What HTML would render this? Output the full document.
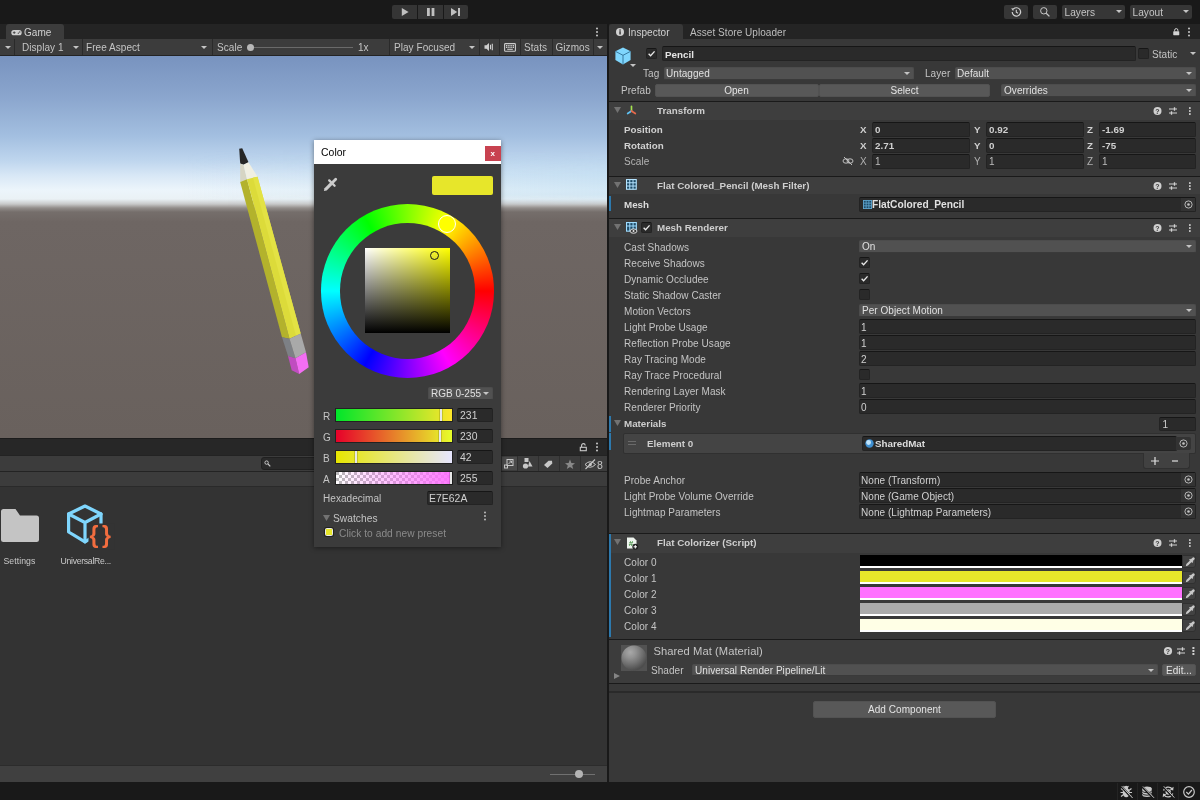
<!DOCTYPE html><html><head><meta charset="utf-8"><title>Unity</title><style>
*{box-sizing:border-box;margin:0;padding:0}
html,body{width:1200px;height:800px;overflow:hidden;background:#191919}
body{font-family:"Liberation Sans",sans-serif;font-size:10px;letter-spacing:0.05px;color:#c4c4c4;position:relative;line-height:12px;-webkit-font-smoothing:antialiased}
.a{position:absolute}
.t{position:absolute;white-space:nowrap;line-height:12px}
.b{font-weight:bold;font-size:9.8px;letter-spacing:0;color:#cecece}
.fld{position:absolute;background:#2a2a2a;border:1px solid #232323;border-top-color:#161616;border-radius:2px;color:#d0d0d0;white-space:nowrap;overflow:hidden}
.dd{position:absolute;background:#515151;border:1px solid #4c4c4c;border-bottom-color:#3a3a3a;border-radius:2px;color:#e0e0e0;white-space:nowrap;overflow:visible}
.btn{position:absolute;background:#585858;border:1px solid #525252;border-radius:2px;color:#e4e4e4;text-align:center;white-space:nowrap}
.hdr{position:absolute;left:609px;width:591px;background:#3e3e3e;border-top:1px solid #1a1a1a}
.cb{position:absolute;width:11px;height:11px;background:#2a2a2a;border:1px solid #232323;border-top-color:#161616;border-radius:2px}
.arr{position:absolute;width:0;height:0;border-left:3px solid transparent;border-right:3px solid transparent;border-top:3.5px solid #c4c4c4}
svg{position:absolute;overflow:visible}
</style></head><body><div id="app" style="position:absolute;left:0;top:0;width:1200px;height:800px;will-change:transform">
<div class="a" style="left:0px;top:0px;width:1200px;height:24px;background:#191919"></div>
<div class="a" style="left:392px;top:5px;width:76px;height:14px;background:#353535;border-radius:2px"></div>
<div class="a" style="left:417px;top:5px;width:1px;height:14px;background:#191919"></div>
<div class="a" style="left:443px;top:5px;width:1px;height:14px;background:#191919"></div>
<svg style="left:392px;top:5px" width="76" height="14" viewBox="392 5 76 14"><path d="M401.800 8 L408.600 12 L401.800 16Z" fill="#c0c0c0"/><rect x="427" y="8" width="2.800" height="8" fill="#c0c0c0"/><rect x="431.600" y="8" width="2.800" height="8" fill="#c0c0c0"/><path d="M451 8 L457.200 12 L451 16Z" fill="#c0c0c0"/><rect x="458" y="8" width="2" height="8" fill="#c0c0c0"/></svg>
<div class="a" style="left:1004px;top:5px;width:24px;height:14px;background:#363636;border-radius:2px"></div>
<div class="a" style="left:1033px;top:5px;width:24px;height:14px;background:#363636;border-radius:2px"></div>
<svg style="left:1010px;top:6px" width="12" height="12" viewBox="0 0 12 12"><path d="M2.2 6 A4.2 4.2 0 1 0 3.4 3" fill="none" stroke="#d0d0d0" stroke-width="1.2"/><path d="M1.2 2.2 L3.8 2.6 L3.2 5.2Z" fill="#d0d0d0"/><path d="M6.3 3.8 V6.3 L8 7.3" fill="none" stroke="#d0d0d0" stroke-width="1.1"/></svg>
<svg style="left:1039px;top:6px" width="12" height="12" viewBox="0 0 12 12"><circle cx="4.800" cy="4.800" r="3.200" fill="none" stroke="#c8c8c8" stroke-width="1"/><path d="M7.200 7.200 L10.400 10.400" stroke="#c8c8c8" stroke-width="1.300"/></svg>
<div class="a" style="left:1062px;top:5px;width:63px;height:14px;background:#363636;border-radius:2px"></div>
<div class="t " style="left:1064.5px;top:7px;font-size:10.1px">Layers</div>
<div class="arr" style="left:1116px;top:10px;border-top-color:#c4c4c4"></div>
<div class="a" style="left:1130px;top:5px;width:62px;height:14px;background:#363636;border-radius:2px"></div>
<div class="t " style="left:1132.5px;top:7px;font-size:10.1px">Layout</div>
<div class="arr" style="left:1183px;top:10px;border-top-color:#c4c4c4"></div>
<div class="a" style="left:0px;top:24px;width:607px;height:15px;background:#242424"></div>
<div class="a" style="left:6px;top:24px;width:58px;height:16px;background:#3c3c3c;border-radius:3px 3px 0 0"></div>
<svg style="left:10.500px;top:29.300px" width="11" height="7.300" viewBox="0 0 12 8"><rect x="0.3" y="1.2" width="11.4" height="5.6" rx="2.8" fill="#d0d0d0"/><path d="M2 4 H5 M3.5 2.6 V5.4" stroke="#3c3c3c" stroke-width="0.9"/><circle cx="8" cy="4.6" r="0.7" fill="#3c3c3c"/><circle cx="9.6" cy="3.3" r="0.7" fill="#3c3c3c"/></svg>
<div class="t " style="left:24px;top:27px;color:#d2d2d2">Game</div>
<svg style="left:595px;top:27px" width="4" height="10" viewBox="0 0 4 10"><circle cx="2" cy="1.5" r="1" fill="#c8c8c8"/><circle cx="2" cy="5" r="1" fill="#c8c8c8"/><circle cx="2" cy="8.5" r="1" fill="#c8c8c8"/></svg>
<div class="a" style="left:0px;top:39px;width:607px;height:17px;background:#3c3c3c;border-bottom:1px solid #232323"></div>
<div class="arr" style="left:5px;top:46px;border-top-color:#c4c4c4"></div>
<div class="a" style="left:14px;top:39px;width:1px;height:16px;background:#2a2a2a"></div>
<div class="t " style="left:22px;top:42px;">Display 1</div>
<div class="arr" style="left:73px;top:46px;border-top-color:#c4c4c4"></div>
<div class="a" style="left:82px;top:39px;width:1px;height:16px;background:#2a2a2a"></div>
<div class="t " style="left:86px;top:42px;">Free Aspect</div>
<div class="arr" style="left:201px;top:46px;border-top-color:#c4c4c4"></div>
<div class="a" style="left:212px;top:39px;width:1px;height:16px;background:#2a2a2a"></div>
<div class="t " style="left:217px;top:42px;">Scale</div>
<div class="a" style="left:250px;top:47px;width:103px;height:1px;background:#6a6a6a"></div>
<div class="a" style="left:247px;top:44px;width:7px;height:7px;background:#b8b8b8;border-radius:50%"></div>
<div class="t " style="left:358px;top:42px;">1x</div>
<div class="a" style="left:389px;top:39px;width:1px;height:16px;background:#2a2a2a"></div>
<div class="t " style="left:394px;top:42px;">Play Focused</div>
<div class="arr" style="left:469px;top:46px;border-top-color:#c4c4c4"></div>
<div class="a" style="left:479px;top:39px;width:1px;height:16px;background:#2a2a2a"></div>
<svg style="left:484px;top:42px" width="11" height="10" viewBox="0 0 11 10"><path d="M0.5 3.3 H2.5 L5 1 V9 L2.5 6.7 H0.5Z" fill="#d0d0d0"/><path d="M6.5 2.8 V7.2 M8.3 1.8 V8.2" stroke="#d0d0d0" stroke-width="1.1"/></svg>
<div class="a" style="left:499px;top:39px;width:1px;height:16px;background:#2a2a2a"></div>
<svg style="left:504px;top:43px" width="12" height="9" viewBox="0 0 12 9"><rect x="0.600" y="0.600" width="10.800" height="7.600" rx="0.800" fill="none" stroke="#cdcdcd" stroke-width="1.100"/><path d="M2 2.600 H10 M2 4.400 H10" stroke="#cdcdcd" stroke-width="1.100" stroke-dasharray="1.400 0.800"/><path d="M3.200 6.300 H8.800" stroke="#cdcdcd" stroke-width="1.100"/></svg>
<div class="a" style="left:520px;top:39px;width:1px;height:16px;background:#2a2a2a"></div>
<div class="t " style="left:524px;top:42px;">Stats</div>
<div class="a" style="left:552px;top:39px;width:1px;height:16px;background:#2a2a2a"></div>
<div class="t " style="left:555.5px;top:42px;">Gizmos</div>
<div class="a" style="left:593px;top:39px;width:1px;height:16px;background:#2a2a2a"></div>
<div class="arr" style="left:597px;top:46px;border-top-color:#c4c4c4"></div>
<div class="a" style="left:0px;top:56px;width:607px;height:382px;background:linear-gradient(to bottom,#7893bf 0px,#8aa5cd 40px,#a3bfe0 80px,#bfd6ee 105px,#d9e8f6 120px,#ecf5fb 134px,#eaf1f5 143px,#c8c9c9 148px,#928d8a 152px,#756e6b 156px,#6e6663 166px,#69615d 382px)"></div>
<div class="a" style="left:0px;top:150px;width:607px;height:56px;background:linear-gradient(to right,rgba(176,214,238,0) 30%,rgba(176,214,238,0.42) 100%);-webkit-mask-image:linear-gradient(to bottom,transparent,#000 45%,#000 80%,transparent);mask-image:linear-gradient(to bottom,transparent,#000 45%,#000 80%,transparent)"></div>
<svg style="left:0;top:56px" width="607" height="382" viewBox="0 56 607 382">
<polygon points="239.200,148.700 242.200,148.200 248.500,162.200 243.500,164.800 240.200,163.500" fill="#262626"/>
<polygon points="240.200,163.500 243.500,164.800 247,179.300 240.200,182" fill="#d6d5c4"/>
<polygon points="243.500,164.800 248.500,162.200 257.500,176.700 247,179.300" fill="#f0efe2"/>
<polygon points="240.200,182 247,179.300 289.500,338.700 282,337.200" fill="#b3b22c"/>
<polygon points="247,179.300 257.500,176.700 300.700,333.500 289.500,338.700" fill="#dcdb3a"/>
<polygon points="253,177.800 257.500,176.700 300.700,333.500 296,335.700" fill="#e3e244"/>
<polygon points="282,337.200 289.500,338.700 295.500,358.200 288,356" fill="#7d8085"/>
<polygon points="289.500,338.700 300.700,333.500 306,352.200 295.500,358.200" fill="#a9a9a9"/>
<polygon points="288,356 295.500,358.200 299.200,374 291.700,370.200" fill="#c04cc0"/>
<polygon points="295.500,358.200 306,352.200 308.700,367.200 299.200,374" fill="#f36ef3"/>
</svg>
<div class="a" style="left:0px;top:438px;width:607px;height:18px;background:#272727;border-top:1px solid #1c1c1c"></div>
<svg style="left:579px;top:442px" width="9" height="10" viewBox="0 0 9 10"><rect x="1.300" y="5.300" width="6" height="3.400" fill="none" stroke="#c8c8c8" stroke-width="1.100"/><path d="M2.600 5 V3.400 A1.800 1.800 0 0 1 6.200 3.400" fill="none" stroke="#c8c8c8" stroke-width="1.100"/></svg>
<svg style="left:595px;top:442px" width="4" height="10" viewBox="0 0 4 10"><circle cx="2" cy="1.5" r="1" fill="#c8c8c8"/><circle cx="2" cy="5" r="1" fill="#c8c8c8"/><circle cx="2" cy="8.5" r="1" fill="#c8c8c8"/></svg>
<div class="a" style="left:0px;top:455px;width:607px;height:17px;background:#3c3c3c;border-top:1px solid #232323;border-bottom:1px solid #232323"></div>
<div class="a" style="left:261px;top:457px;width:70px;height:13px;background:#2a2a2a;border-radius:3px;border:1px solid #202020"></div>
<svg style="left:264px;top:460px" width="7" height="7" viewBox="0 0 7 7"><circle cx="2.6" cy="2.6" r="1.7" fill="none" stroke="#c8c8c8" stroke-width="1"/><path d="M4 4 L6.3 6.3" stroke="#c8c8c8" stroke-width="1.1"/></svg>
<div class="a" style="left:0px;top:472px;width:607px;height:15px;background:#3c3c3c;border-bottom:1px solid #2a2a2a"></div>
<div class="a" style="left:0px;top:487px;width:607px;height:278px;background:#333333"></div>
<div class="a" style="left:0px;top:765px;width:607px;height:17px;background:#404040;border-top:1px solid #2c2c2c"></div>
<div class="a" style="left:550px;top:773.6px;width:45px;height:1.2px;background:#707070"></div>
<div class="a" style="left:575px;top:770.2px;width:8px;height:8px;background:#b4b4b4;border-radius:50%"></div>
<div class="a" style="left:501px;top:456px;width:1px;height:15px;background:#2f2f2f"></div>
<div class="a" style="left:517px;top:456px;width:1px;height:15px;background:#2f2f2f"></div>
<div class="a" style="left:538px;top:456px;width:1px;height:15px;background:#2f2f2f"></div>
<div class="a" style="left:559px;top:456px;width:1px;height:15px;background:#2f2f2f"></div>
<div class="a" style="left:580px;top:456px;width:1px;height:15px;background:#2f2f2f"></div>
<svg style="left:502px;top:457px" width="105" height="14" viewBox="502 457 105 14">
<rect x="502" y="457" width="15" height="13" fill="#4a4a4a"/>
<rect x="507" y="459.5" width="6" height="6" fill="none" stroke="#c8c8c8" stroke-width="1"/><rect x="504.5" y="465" width="3" height="3" fill="none" stroke="#c8c8c8" stroke-width="1"/><path d="M508.5 464 L511.5 461 M509.5 461 H511.5 V463" stroke="#c8c8c8" stroke-width="0.9" fill="none"/>
<rect x="524.500" y="458" width="4" height="4" fill="#c8c8c8"/><circle cx="525.500" cy="466" r="2.600" fill="#c8c8c8"/><path d="M529.500 461 L532.500 466.500 H528Z" fill="#c8c8c8"/>
<path d="M544 465 L548.500 460.800 L552 460.800 L552.300 463.500 L547.500 468Z" fill="#c8c8c8"/>
<path d="M570 459.5 L571.4 463 L575 463.2 L572.2 465.5 L573.2 469 L570 467 L566.8 469 L567.8 465.5 L565 463.2 L568.6 463Z" fill="#8a8a8a"/>
<path d="M585 464.5 Q590 459 595.5 464.5 Q590 470 585 464.5Z" fill="none" stroke="#c8c8c8" stroke-width="1"/><circle cx="590.3" cy="464.5" r="1.5" fill="#c8c8c8"/><path d="M585.5 469 L595 459.5" stroke="#c8c8c8" stroke-width="1.1"/>
</svg>
<div class="t " style="left:597px;top:459px;font-size:10.5px">8</div>
<svg style="left:0;top:500px" width="120" height="50" viewBox="0 500 120 50">
<path d="M1 511.500 a2.500 2.500 0 0 1 2.500 -2.500 H15.500 L20 515.500 H36.500 a2.500 2.500 0 0 1 2.500 2.500 V539.500 a2.500 2.500 0 0 1 -2.500 2.500 H3.500 a2.500 2.500 0 0 1 -2.500 -2.500Z" fill="#c4c4c4"/>
<g fill="none" stroke="#7fd6fd" stroke-width="3.200" stroke-linejoin="round" stroke-linecap="round"><path d="M85 506 L101 514 V532 L85 541.800 L68.600 532 V514Z"/><path d="M68.600 514 L85 522.500 L101 514 M85 522.500 V541.800"/></g>
<rect x="88.500" y="523.500" width="26" height="26" fill="#333333"/>
</svg>
<div class="t " style="left:89.5px;top:520px;font-size:23px;font-weight:bold;color:#f26d3f;line-height:30px;letter-spacing:3.500px">{}</div>
<div class="t " style="left:3.5px;top:555px;font-size:8.7px;color:#cacaca">Settings</div>
<div class="t " style="left:60.5px;top:555px;font-size:8.7px;letter-spacing:-0.3px;color:#cacaca">UniversalRe...</div>
<div class="a" style="left:607px;top:24px;width:2px;height:758px;background:#191919"></div>
<div class="a" style="left:609px;top:24px;width:591px;height:758px;background:#383838"></div>
<div class="a" style="left:609px;top:24px;width:591px;height:15px;background:#242424"></div>
<div class="a" style="left:609px;top:24px;width:74px;height:16px;background:#383838;border-radius:3px 3px 0 0"></div>
<svg style="left:616px;top:28px" width="8" height="8" viewBox="0 0 8 8"><circle cx="4" cy="4" r="4" fill="#d2d2d2"/><rect x="3.3" y="3.2" width="1.5" height="3.3" fill="#383838"/><rect x="3.3" y="1.4" width="1.5" height="1.3" fill="#383838"/></svg>
<div class="t " style="left:628px;top:27px;color:#d2d2d2">Inspector</div>
<div class="t " style="left:690px;top:27px;color:#bdbdbd">Asset Store Uploader</div>
<svg style="left:1172.5px;top:28px" width="6.5" height="7.5" viewBox="0 0 8 9"><rect x="0.3" y="3.8" width="7.4" height="5" rx="0.6" fill="#d2d2d2"/><path d="M2 4 V2.6 A2 2 0 0 1 6 2.6 V4" fill="none" stroke="#d2d2d2" stroke-width="1.2"/></svg>
<svg style="left:1187px;top:27px" width="4" height="10" viewBox="0 0 4 10"><circle cx="2" cy="1.5" r="1" fill="#c8c8c8"/><circle cx="2" cy="5" r="1" fill="#c8c8c8"/><circle cx="2" cy="8.5" r="1" fill="#c8c8c8"/></svg>
<svg style="left:614px;top:47px" width="18" height="18" viewBox="0 0 18 18"><path d="M9 0.6 L16.6 4.3 V13 L9 17.4 L1.4 13 V4.3Z" fill="#7fd6fd"/><path d="M1.4 4.3 L9 8.3 L16.6 4.3 M9 8.3 V17.4" stroke="#2f6f96" stroke-width="0.9" fill="none"/></svg>
<div class="arr" style="left:630px;top:64px;border-top-color:#c4c4c4"></div>
<div class="cb" style="left:646px;top:48px"><svg width="9" height="9" viewBox="0 0 10 10" style="left:0;top:0"><path d="M1.8 5.2 L4 7.4 L8.4 2.6" fill="none" stroke="#e8e8e8" stroke-width="1.5"/></svg></div>
<div class="fld" style="left:662px;top:46px;width:474px;height:15px;line-height:12px;padding-top:2px;padding-left:2px;"><b class="b" style="color:#e4e4e4">Pencil</b></div>
<div class="cb" style="left:1138px;top:48px"></div>
<div class="t " style="left:1152px;top:49px;">Static</div>
<div class="arr" style="left:1189.5px;top:52px;border-top-color:#c4c4c4"></div>
<div class="t " style="left:643px;top:68px;">Tag</div>
<div class="dd" style="left:664px;top:67px;width:250px;height:13px;line-height:12px;padding-top:0px;padding-left:1px;">Untagged</div>
<div class="arr" style="left:903.5px;top:72px;border-top-color:#c4c4c4"></div>
<div class="t " style="left:925px;top:68px;">Layer</div>
<div class="dd" style="left:955px;top:67px;width:241px;height:13px;line-height:12px;padding-top:0px;padding-left:1px;">Default</div>
<div class="arr" style="left:1185.5px;top:72px;border-top-color:#c4c4c4"></div>
<div class="t " style="left:621px;top:85px;">Prefab</div>
<div class="btn" style="left:654.5px;top:83.5px;width:164px;height:13px;line-height:12px;padding-top:0px;">Open</div>
<div class="btn" style="left:819px;top:83.5px;width:171px;height:13px;line-height:12px;padding-top:0px;">Select</div>
<div class="dd" style="left:1001px;top:83.5px;width:195px;height:13px;line-height:12px;padding-top:0px;padding-left:2px;">Overrides</div>
<div class="arr" style="left:1185.5px;top:88.5px;border-top-color:#c4c4c4"></div>
<div class="hdr" style="top:101px;height:19px"></div>
<svg style="left:614px;top:107px" width="7" height="6" viewBox="0 0 7 6"><path d="M0 0 H7 L3.5 6Z" fill="#727272"/></svg>
<svg style="left:626px;top:105px" width="11" height="11" viewBox="0 0 12 12"><path d="M6 6.5 V1.5" stroke="#a6e34f" stroke-width="1.8" stroke-linecap="round"/><path d="M6 6.5 L1.8 9.3" stroke="#5fc3f5" stroke-width="1.8" stroke-linecap="round"/><path d="M6 6.5 L10.2 9.3" stroke="#e8694a" stroke-width="1.8" stroke-linecap="round"/></svg>
<div class="t b" style="left:657px;top:105px;">Transform</div>
<svg style="left:1153px;top:105.5px" width="40" height="10" viewBox="0 0 40 10"><circle cx="4.5" cy="5" r="4" fill="#d0d0d0"/><text x="4.5" y="7.6" font-size="7" font-weight="bold" text-anchor="middle" fill="#3e3e3e" font-family="Liberation Sans,sans-serif">?</text><path d="M16 3 H24 M16 7 H24" stroke="#d0d0d0" stroke-width="1.1"/><path d="M21.5 1.2 V4.8 M18.5 5.2 V8.8" stroke="#d0d0d0" stroke-width="1.3"/><rect x="36" y="1.200" width="1.700" height="1.700" fill="#d0d0d0"/><rect x="36" y="4.200" width="1.700" height="1.700" fill="#d0d0d0"/><rect x="36" y="7.200" width="1.700" height="1.700" fill="#d0d0d0"/></svg>
<div class="t b" style="left:624px;top:124px;color:#d0d0d0">Position</div>
<div class="t b" style="left:860px;top:124px;color:#d0d0d0">X</div>
<div class="fld" style="left:872px;top:122px;width:98px;height:15px;line-height:12px;padding-top:1px;padding-left:2px;font-weight:bold;font-size:9.8px;color:#d0d0d0;">0</div>
<div class="t b" style="left:974px;top:124px;color:#d0d0d0">Y</div>
<div class="fld" style="left:986px;top:122px;width:98px;height:15px;line-height:12px;padding-top:1px;padding-left:2px;font-weight:bold;font-size:9.8px;color:#d0d0d0;">0.92</div>
<div class="t b" style="left:1087px;top:124px;color:#d0d0d0">Z</div>
<div class="fld" style="left:1099px;top:122px;width:97px;height:15px;line-height:12px;padding-top:1px;padding-left:2px;font-weight:bold;font-size:9.8px;color:#d0d0d0;">-1.69</div>
<div class="t b" style="left:624px;top:140px;color:#d0d0d0">Rotation</div>
<div class="t b" style="left:860px;top:140px;color:#d0d0d0">X</div>
<div class="fld" style="left:872px;top:138px;width:98px;height:15px;line-height:12px;padding-top:1px;padding-left:2px;font-weight:bold;font-size:9.8px;color:#d0d0d0;">2.71</div>
<div class="t b" style="left:974px;top:140px;color:#d0d0d0">Y</div>
<div class="fld" style="left:986px;top:138px;width:98px;height:15px;line-height:12px;padding-top:1px;padding-left:2px;font-weight:bold;font-size:9.8px;color:#d0d0d0;">0</div>
<div class="t b" style="left:1087px;top:140px;color:#d0d0d0">Z</div>
<div class="fld" style="left:1099px;top:138px;width:97px;height:15px;line-height:12px;padding-top:1px;padding-left:2px;font-weight:bold;font-size:9.8px;color:#d0d0d0;">-75</div>
<div class="t " style="left:624px;top:156px;color:#b4b4b4">Scale</div>
<div class="t " style="left:860px;top:156px;color:#b0b0b0">X</div>
<div class="fld" style="left:872px;top:154px;width:98px;height:15px;line-height:12px;padding-top:1px;padding-left:2px;color:#bcbcbc;">1</div>
<div class="t " style="left:974px;top:156px;color:#b0b0b0">Y</div>
<div class="fld" style="left:986px;top:154px;width:98px;height:15px;line-height:12px;padding-top:1px;padding-left:2px;color:#bcbcbc;">1</div>
<div class="t " style="left:1087px;top:156px;color:#b0b0b0">Z</div>
<div class="fld" style="left:1099px;top:154px;width:97px;height:15px;line-height:12px;padding-top:1px;padding-left:2px;color:#bcbcbc;">1</div>
<svg style="left:842px;top:156px" width="12" height="10" viewBox="0 0 12 10"><ellipse cx="4" cy="5" rx="3" ry="2.2" fill="none" stroke="#c0c0c0" stroke-width="1"/><ellipse cx="8" cy="5" rx="3" ry="2.2" fill="none" stroke="#c0c0c0" stroke-width="1"/><path d="M2 1 L10 9" stroke="#c0c0c0" stroke-width="1"/></svg>
<div class="hdr" style="top:176px;height:18px"></div>
<svg style="left:614px;top:182px" width="7" height="6" viewBox="0 0 7 6"><path d="M0 0 H7 L3.5 6Z" fill="#727272"/></svg>
<svg style="left:625.5px;top:179px" width="10.8" height="10.8" viewBox="0 0 12 12"><rect x="0.6" y="0.6" width="10.8" height="10.8" fill="#1e4a66" stroke="#b4e4ff" stroke-width="1.2"/><path d="M4.2 0.6 V11.4 M7.8 0.6 V11.4 M0.6 4.2 H11.4 M0.6 7.8 H11.4" stroke="#b4e4ff" stroke-width="1.1"/></svg>
<div class="t b" style="left:657px;top:180px;">Flat Colored_Pencil (Mesh Filter)</div>
<svg style="left:1153px;top:180.5px" width="40" height="10" viewBox="0 0 40 10"><circle cx="4.5" cy="5" r="4" fill="#d0d0d0"/><text x="4.5" y="7.6" font-size="7" font-weight="bold" text-anchor="middle" fill="#3e3e3e" font-family="Liberation Sans,sans-serif">?</text><path d="M16 3 H24 M16 7 H24" stroke="#d0d0d0" stroke-width="1.1"/><path d="M21.5 1.2 V4.8 M18.5 5.2 V8.8" stroke="#d0d0d0" stroke-width="1.3"/><rect x="36" y="1.200" width="1.700" height="1.700" fill="#d0d0d0"/><rect x="36" y="4.200" width="1.700" height="1.700" fill="#d0d0d0"/><rect x="36" y="7.200" width="1.700" height="1.700" fill="#d0d0d0"/></svg>
<div class="a" style="left:609px;top:196px;width:1.6px;height:15px;background:#2d79ad"></div>
<div class="t b" style="left:624px;top:199px;color:#dcdcdc">Mesh</div>
<div class="fld" style="left:859px;top:197px;width:337px;height:15px;line-height:12px;padding-top:2px;padding-left:3px;"></div>
<svg style="left:863px;top:200px" width="9" height="9" viewBox="0 0 12 12"><rect x="0.6" y="0.6" width="10.8" height="10.8" fill="#1e4a66" stroke="#5fa6cf" stroke-width="1.2"/><path d="M4.2 0.6 V11.4 M7.8 0.6 V11.4 M0.6 4.2 H11.4 M0.6 7.8 H11.4" stroke="#5fa6cf" stroke-width="1.1"/></svg>
<div class="t b" style="left:872px;top:199px;color:#e0e0e0;font-size:10.2px">FlatColored_Pencil</div>
<div class="a" style="left:1181px;top:198px;width:14px;height:13px;background:#333333"></div>
<svg style="left:1184px;top:200px" width="9" height="9" viewBox="0 0 9 9"><circle cx="4.5" cy="4.5" r="3.6" fill="none" stroke="#c4c4c4" stroke-width="0.9"/><circle cx="4.5" cy="4.5" r="1.3" fill="#c4c4c4"/></svg>
<div class="hdr" style="top:218px;height:19px"></div>
<svg style="left:614px;top:224px" width="7" height="6" viewBox="0 0 7 6"><path d="M0 0 H7 L3.5 6Z" fill="#727272"/></svg>
<svg style="left:625.5px;top:221.5px" width="11.8" height="11.8" viewBox="0 0 13 13"><rect x="0.6" y="0.6" width="10.8" height="9.5" fill="#1e4a66" stroke="#9fdcff" stroke-width="1.2"/><path d="M4.2 0.6 V10 M7.8 0.6 V10 M0.6 4.4 H11.4" stroke="#9fdcff" stroke-width="1.1"/><ellipse cx="8.3" cy="10" rx="3.8" ry="2.4" fill="#383838" stroke="#e8e8e8" stroke-width="1"/><circle cx="8.3" cy="10" r="1.1" fill="#e8e8e8"/></svg>
<div class="cb" style="left:641px;top:222px"><svg width="9" height="9" viewBox="0 0 10 10" style="left:0;top:0"><path d="M1.8 5.2 L4 7.4 L8.4 2.6" fill="none" stroke="#e8e8e8" stroke-width="1.5"/></svg></div>
<div class="t b" style="left:657px;top:222px;">Mesh Renderer</div>
<svg style="left:1153px;top:222.5px" width="40" height="10" viewBox="0 0 40 10"><circle cx="4.5" cy="5" r="4" fill="#d0d0d0"/><text x="4.5" y="7.6" font-size="7" font-weight="bold" text-anchor="middle" fill="#3e3e3e" font-family="Liberation Sans,sans-serif">?</text><path d="M16 3 H24 M16 7 H24" stroke="#d0d0d0" stroke-width="1.1"/><path d="M21.5 1.2 V4.8 M18.5 5.2 V8.8" stroke="#d0d0d0" stroke-width="1.3"/><rect x="36" y="1.200" width="1.700" height="1.700" fill="#d0d0d0"/><rect x="36" y="4.200" width="1.700" height="1.700" fill="#d0d0d0"/><rect x="36" y="7.200" width="1.700" height="1.700" fill="#d0d0d0"/></svg>
<div class="t " style="left:624px;top:242px;">Cast Shadows</div>
<div class="dd" style="left:859px;top:240px;width:337px;height:13px;line-height:12px;padding-top:0px;padding-left:2px;">On</div>
<div class="arr" style="left:1185.5px;top:245px;border-top-color:#c4c4c4"></div>
<div class="t " style="left:624px;top:258px;">Receive Shadows</div>
<div class="cb" style="left:859px;top:257px"><svg width="9" height="9" viewBox="0 0 10 10" style="left:0;top:0"><path d="M1.8 5.2 L4 7.4 L8.4 2.6" fill="none" stroke="#e8e8e8" stroke-width="1.5"/></svg></div>
<div class="t " style="left:624px;top:274px;">Dynamic Occludee</div>
<div class="cb" style="left:859px;top:273px"><svg width="9" height="9" viewBox="0 0 10 10" style="left:0;top:0"><path d="M1.8 5.2 L4 7.4 L8.4 2.6" fill="none" stroke="#e8e8e8" stroke-width="1.5"/></svg></div>
<div class="t " style="left:624px;top:290px;">Static Shadow Caster</div>
<div class="cb" style="left:859px;top:289px"></div>
<div class="t " style="left:624px;top:306px;">Motion Vectors</div>
<div class="dd" style="left:859px;top:304px;width:337px;height:13px;line-height:12px;padding-top:0px;padding-left:2px;">Per Object Motion</div>
<div class="arr" style="left:1185.5px;top:309px;border-top-color:#c4c4c4"></div>
<div class="t " style="left:624px;top:322px;">Light Probe Usage</div>
<div class="fld" style="left:859px;top:319px;width:337px;height:15px;line-height:12px;padding-top:2px;padding-left:1px;">1</div>
<div class="t " style="left:624px;top:338px;">Reflection Probe Usage</div>
<div class="fld" style="left:859px;top:335px;width:337px;height:15px;line-height:12px;padding-top:2px;padding-left:1px;">1</div>
<div class="t " style="left:624px;top:354px;">Ray Tracing Mode</div>
<div class="fld" style="left:859px;top:351px;width:337px;height:15px;line-height:12px;padding-top:2px;padding-left:1px;">2</div>
<div class="t " style="left:624px;top:370px;">Ray Trace Procedural</div>
<div class="cb" style="left:859px;top:369px"></div>
<div class="t " style="left:624px;top:386px;">Rendering Layer Mask</div>
<div class="fld" style="left:859px;top:383px;width:337px;height:15px;line-height:12px;padding-top:2px;padding-left:1px;">1</div>
<div class="t " style="left:624px;top:402px;">Renderer Priority</div>
<div class="fld" style="left:859px;top:399px;width:337px;height:15px;line-height:12px;padding-top:2px;padding-left:1px;">0</div>
<div class="a" style="left:609px;top:416px;width:1.6px;height:16px;background:#2d79ad"></div>
<svg style="left:614px;top:420px" width="7" height="6" viewBox="0 0 7 6"><path d="M0 0 H7 L3.5 6Z" fill="#727272"/></svg>
<div class="t b" style="left:624px;top:418px;">Materials</div>
<div class="fld" style="left:1158.5px;top:416.5px;width:37.5px;height:14px;line-height:12px;padding-top:1px;padding-left:3px;">1</div>
<div class="a" style="left:609px;top:433px;width:1.6px;height:17px;background:#2d79ad"></div>
<div class="a" style="left:623px;top:433px;width:573px;height:21px;background:#444444;border:1px solid #303030;border-radius:2px"></div>
<div class="a" style="left:628px;top:441px;width:8px;height:1px;background:#6a6a6a"></div>
<div class="a" style="left:628px;top:444px;width:8px;height:1px;background:#6a6a6a"></div>
<div class="t b" style="left:647px;top:438px;">Element 0</div>
<div class="fld" style="left:862px;top:436px;width:315px;height:15px;line-height:12px;padding-top:2px;padding-left:3px;"></div>
<svg style="left:865px;top:439px" width="9" height="9" viewBox="0 0 9 9"><circle cx="4.5" cy="4.5" r="4.2" fill="#3f8fd0"/><circle cx="3.6" cy="3.5" r="2.4" fill="#bfe4fb"/></svg>
<div class="t b" style="left:875px;top:438px;color:#dedede">SharedMat</div>
<div class="a" style="left:1176px;top:437px;width:14.5px;height:13px;background:#333333;border-radius:0 2px 2px 0"></div>
<svg style="left:1178.8px;top:439px" width="9" height="9" viewBox="0 0 9 9"><circle cx="4.5" cy="4.5" r="3.6" fill="none" stroke="#c4c4c4" stroke-width="0.9"/><circle cx="4.5" cy="4.5" r="1.3" fill="#c4c4c4"/></svg>
<div class="a" style="left:1143px;top:453px;width:47px;height:16px;background:#414141;border:1px solid #303030;border-top:none;border-radius:0 0 3px 3px"></div>
<svg style="left:1150px;top:456px" width="32" height="10" viewBox="0 0 32 10"><path d="M1 5 H9 M5 1 V9" stroke="#e0e0e0" stroke-width="1.2"/><path d="M22 5 H28" stroke="#e0e0e0" stroke-width="1.2"/></svg>
<div class="t " style="left:624px;top:475px;">Probe Anchor</div>
<div class="fld" style="left:859px;top:472px;width:337px;height:15px;line-height:12px;padding-top:2px;padding-left:1px;">None (Transform)</div>
<div class="a" style="left:1181px;top:473px;width:14px;height:13px;background:#333333"></div>
<svg style="left:1184px;top:475px" width="9" height="9" viewBox="0 0 9 9"><circle cx="4.5" cy="4.5" r="3.6" fill="none" stroke="#c4c4c4" stroke-width="0.9"/><circle cx="4.5" cy="4.5" r="1.3" fill="#c4c4c4"/></svg>
<div class="t " style="left:624px;top:491px;">Light Probe Volume Override</div>
<div class="fld" style="left:859px;top:488px;width:337px;height:15px;line-height:12px;padding-top:2px;padding-left:1px;">None (Game Object)</div>
<div class="a" style="left:1181px;top:489px;width:14px;height:13px;background:#333333"></div>
<svg style="left:1184px;top:491px" width="9" height="9" viewBox="0 0 9 9"><circle cx="4.5" cy="4.5" r="3.6" fill="none" stroke="#c4c4c4" stroke-width="0.9"/><circle cx="4.5" cy="4.5" r="1.3" fill="#c4c4c4"/></svg>
<div class="t " style="left:624px;top:507px;">Lightmap Parameters</div>
<div class="fld" style="left:859px;top:504px;width:337px;height:15px;line-height:12px;padding-top:2px;padding-left:1px;">None (Lightmap Parameters)</div>
<div class="a" style="left:1181px;top:505px;width:14px;height:13px;background:#333333"></div>
<svg style="left:1184px;top:507px" width="9" height="9" viewBox="0 0 9 9"><circle cx="4.5" cy="4.5" r="3.6" fill="none" stroke="#c4c4c4" stroke-width="0.9"/><circle cx="4.5" cy="4.5" r="1.3" fill="#c4c4c4"/></svg>
<div class="hdr" style="top:533px;height:20px"></div>
<svg style="left:614px;top:539px" width="7" height="6" viewBox="0 0 7 6"><path d="M0 0 H7 L3.5 6Z" fill="#727272"/></svg>
<svg style="left:626px;top:537px" width="13" height="13" viewBox="0 0 13 13"><path d="M1 0.5 H7.5 L10.5 3.5 V11.5 H1Z" fill="#eef4ee"/><text x="5" y="8.6" font-size="8" font-weight="bold" text-anchor="middle" fill="#3a8a3a" font-family="Liberation Sans,sans-serif">#</text><circle cx="9.3" cy="9.8" r="3" fill="#222"/><path d="M7.6 9.8 H11 M9.3 8.1 V11.5" stroke="#fff" stroke-width="1"/></svg>
<div class="t b" style="left:657px;top:537px;">Flat Colorizer (Script)</div>
<svg style="left:1153px;top:537.5px" width="40" height="10" viewBox="0 0 40 10"><circle cx="4.5" cy="5" r="4" fill="#d0d0d0"/><text x="4.5" y="7.6" font-size="7" font-weight="bold" text-anchor="middle" fill="#3e3e3e" font-family="Liberation Sans,sans-serif">?</text><path d="M16 3 H24 M16 7 H24" stroke="#d0d0d0" stroke-width="1.1"/><path d="M21.5 1.2 V4.8 M18.5 5.2 V8.8" stroke="#d0d0d0" stroke-width="1.3"/><rect x="36" y="1.200" width="1.700" height="1.700" fill="#d0d0d0"/><rect x="36" y="4.200" width="1.700" height="1.700" fill="#d0d0d0"/><rect x="36" y="7.200" width="1.700" height="1.700" fill="#d0d0d0"/></svg>
<div class="a" style="left:609px;top:534px;width:1.6px;height:103px;background:#2d79ad"></div>
<div class="t " style="left:624px;top:557px;">Color 0</div>
<div class="a" style="left:860px;top:555px;width:322px;height:13.2px;background:#000000;border-bottom:2.2px solid #fff"></div>
<div class="a" style="left:1182px;top:554.7px;width:14px;height:13.8px;background:#424242;border:1px solid #303030;border-radius:0 3px 3px 0"></div>
<svg style="left:1184.5px;top:556.5px" width="10" height="10" viewBox="0 0 10 10"><path d="M0.800 9.200 L1.400 7 L5.200 3.200 L6.800 4.800 L3 8.600Z" fill="#c8c8c8"/><path d="M4.600 2.200 L7.800 5.400" stroke="#c8c8c8" stroke-width="1.500"/><path d="M6.500 3.500 L8.400 1.600" stroke="#c8c8c8" stroke-width="2.600" stroke-linecap="round"/></svg>
<div class="t " style="left:624px;top:573px;">Color 1</div>
<div class="a" style="left:860px;top:571px;width:322px;height:13.2px;background:#e7e62a;border-bottom:2.2px solid #fff"></div>
<div class="a" style="left:1182px;top:570.7px;width:14px;height:13.8px;background:#424242;border:1px solid #303030;border-radius:0 3px 3px 0"></div>
<svg style="left:1184.5px;top:572.5px" width="10" height="10" viewBox="0 0 10 10"><path d="M0.800 9.200 L1.400 7 L5.200 3.200 L6.800 4.800 L3 8.600Z" fill="#c8c8c8"/><path d="M4.600 2.200 L7.800 5.400" stroke="#c8c8c8" stroke-width="1.500"/><path d="M6.500 3.500 L8.400 1.600" stroke="#c8c8c8" stroke-width="2.600" stroke-linecap="round"/></svg>
<div class="t " style="left:624px;top:589px;">Color 2</div>
<div class="a" style="left:860px;top:587px;width:322px;height:13.2px;background:#ff70ff;border-bottom:2.2px solid #fff"></div>
<div class="a" style="left:1182px;top:586.7px;width:14px;height:13.8px;background:#424242;border:1px solid #303030;border-radius:0 3px 3px 0"></div>
<svg style="left:1184.5px;top:588.5px" width="10" height="10" viewBox="0 0 10 10"><path d="M0.800 9.200 L1.400 7 L5.200 3.200 L6.800 4.800 L3 8.600Z" fill="#c8c8c8"/><path d="M4.600 2.200 L7.800 5.400" stroke="#c8c8c8" stroke-width="1.500"/><path d="M6.500 3.500 L8.400 1.600" stroke="#c8c8c8" stroke-width="2.600" stroke-linecap="round"/></svg>
<div class="t " style="left:624px;top:605px;">Color 3</div>
<div class="a" style="left:860px;top:603px;width:322px;height:13.2px;background:#ababab;border-bottom:2.2px solid #fff"></div>
<div class="a" style="left:1182px;top:602.7px;width:14px;height:13.8px;background:#424242;border:1px solid #303030;border-radius:0 3px 3px 0"></div>
<svg style="left:1184.5px;top:604.5px" width="10" height="10" viewBox="0 0 10 10"><path d="M0.800 9.200 L1.400 7 L5.200 3.200 L6.800 4.800 L3 8.600Z" fill="#c8c8c8"/><path d="M4.600 2.200 L7.800 5.400" stroke="#c8c8c8" stroke-width="1.500"/><path d="M6.500 3.500 L8.400 1.600" stroke="#c8c8c8" stroke-width="2.600" stroke-linecap="round"/></svg>
<div class="t " style="left:624px;top:621px;">Color 4</div>
<div class="a" style="left:860px;top:619px;width:322px;height:13.2px;background:#ffffe6;border-bottom:2.2px solid #fff"></div>
<div class="a" style="left:1182px;top:618.7px;width:14px;height:13.8px;background:#424242;border:1px solid #303030;border-radius:0 3px 3px 0"></div>
<svg style="left:1184.5px;top:620.5px" width="10" height="10" viewBox="0 0 10 10"><path d="M0.800 9.200 L1.400 7 L5.200 3.200 L6.800 4.800 L3 8.600Z" fill="#c8c8c8"/><path d="M4.600 2.200 L7.800 5.400" stroke="#c8c8c8" stroke-width="1.500"/><path d="M6.500 3.500 L8.400 1.600" stroke="#c8c8c8" stroke-width="2.600" stroke-linecap="round"/></svg>
<div class="a" style="left:609px;top:639px;width:591px;height:1px;background:#1a1a1a"></div>
<div class="a" style="left:609px;top:640px;width:591px;height:43px;background:#3c3c3c"></div>
<div class="a" style="left:621px;top:645px;width:26px;height:26px;background:radial-gradient(circle 13px at 50% 50%,rgba(0,0,0,0) 12px,#525252 13px),radial-gradient(circle at 36% 28%,#a8a8a8 0%,#929292 22%,#707070 48%,#4e4e4e 72%,#3c3c3c 100%)"></div>
<div class="a" style="left:614px;top:673px;width:0;height:0;border-top:3.5px solid transparent;border-bottom:3.5px solid transparent;border-left:6px solid #848484"></div>
<div class="t " style="left:653.5px;top:644.5px;font-size:11.2px;line-height:13px;color:#c4c4c4">Shared Mat (Material)</div>
<div class="t " style="left:651px;top:665px;font-size:10px">Shader</div>
<div class="dd" style="left:692px;top:664px;width:466px;height:12px;line-height:12px;padding-top:0px;padding-left:2px;font-size:10px">Universal Render Pipeline/Lit</div>
<div class="arr" style="left:1147.5px;top:669px;border-top-color:#c4c4c4"></div>
<div class="btn" style="left:1162px;top:664px;width:34px;height:12px;line-height:12px;padding-top:0px;font-size:10px">Edit...</div>
<svg style="left:1163px;top:646px" width="34" height="10" viewBox="0 0 34 10"><circle cx="5" cy="5" r="4.1" fill="#d0d0d0"/><text x="5" y="7.6" font-size="7" font-weight="bold" text-anchor="middle" fill="#3e3e3e" font-family="Liberation Sans,sans-serif">?</text><path d="M14 3 H22 M14 7 H22" stroke="#d0d0d0" stroke-width="1.1"/><path d="M19.500 1.200 V4.800 M16.500 5.200 V8.800" stroke="#d0d0d0" stroke-width="1.300"/><rect x="29.400" y="1" width="2" height="2" fill="#d0d0d0"/><rect x="29.400" y="4" width="2" height="2" fill="#d0d0d0"/><rect x="29.400" y="7" width="2" height="2" fill="#d0d0d0"/></svg>
<div class="a" style="left:609px;top:683px;width:591px;height:1px;background:#1a1a1a"></div>
<div class="a" style="left:609px;top:691px;width:591px;height:2px;background:#2a2a2a"></div>
<div class="btn" style="left:813px;top:701px;width:183px;height:17px;line-height:12px;padding-top:2px;font-size:10px">Add Component</div>
<div class="a" style="left:0px;top:782px;width:1200px;height:18px;background:#191919"></div>
<div class="a" style="left:1117px;top:783px;width:1px;height:17px;background:#242424"></div>
<div class="a" style="left:1137px;top:783px;width:1px;height:17px;background:#242424"></div>
<div class="a" style="left:1157px;top:783px;width:1px;height:17px;background:#242424"></div>
<div class="a" style="left:1178px;top:783px;width:1px;height:17px;background:#242424"></div>
<svg style="left:1116px;top:782px" width="84" height="18" viewBox="1116 782 84 18">
<g stroke="#c8c8c8" stroke-width="1.1" fill="none"><path d="M1121 788.500 L1131.500 796.500 M1120.500 792.500 H1132 M1121 796.500 L1131.500 788.500 M1123.500 786 L1126 789 L1128.500 786"/></g>
<ellipse cx="1126.200" cy="792.600" rx="3.500" ry="4.700" fill="#c8c8c8"/><circle cx="1126.200" cy="787.800" r="2" fill="#c8c8c8"/>
<path d="M1120.500 785.500 L1132.500 798.500" stroke="#191919" stroke-width="2.200"/><path d="M1121.800 786.200 L1132.600 798" stroke="#c8c8c8" stroke-width="1"/>
<path d="M1142.300 788.500 V795 A4.700 2 0 0 0 1151.700 795 V788.500Z" fill="#c8c8c8"/><ellipse cx="1147" cy="788.500" rx="4.700" ry="2.100" fill="#c8c8c8"/>
<path d="M1142.300 790.700 A4.700 2 0 0 0 1151.700 790.700 M1142.300 793.200 A4.700 2 0 0 0 1151.700 793.200" stroke="#191919" stroke-width="0.900" fill="none"/>
<path d="M1141.500 786 L1153.500 798" stroke="#191919" stroke-width="2.200"/><path d="M1143 786.500 L1154 797.800" stroke="#c8c8c8" stroke-width="1"/>
<g fill="none" stroke="#c8c8c8" stroke-width="1.300"><path d="M1163.600 790.500 A4.900 4.900 0 0 1 1172.300 789.200"/><path d="M1172.700 793.500 A4.900 4.900 0 0 1 1164 794.800"/></g>
<path d="M1173.600 786.800 L1173.200 790.600 L1169.800 789.400Z M1162.700 797.200 L1163.100 793.400 L1166.500 794.600Z" fill="#c8c8c8"/>
<circle cx="1168.200" cy="792" r="2.700" fill="#c8c8c8"/>
<path d="M1162.500 785.800 L1174 798" stroke="#191919" stroke-width="2.200"/><path d="M1163.800 786.300 L1174.300 797.600" stroke="#c8c8c8" stroke-width="1"/>
<circle cx="1189" cy="792" r="5.300" fill="none" stroke="#c8c8c8" stroke-width="1.200"/><path d="M1186.300 792 L1188.400 794.100 L1191.900 790" fill="none" stroke="#c8c8c8" stroke-width="1.300"/>
</svg>
<div class="a" style="left:314px;top:140px;width:187px;height:406.5px;background:#3b3b3b;box-shadow:0 1px 5px rgba(0,0,0,0.45)"></div>
<div class="a" style="left:314px;top:140px;width:187px;height:24px;background:#ffffff"></div>
<div class="t " style="left:321px;top:147px;color:#000;font-size:10.4px">Color</div>
<div class="a" style="left:485px;top:146px;width:15.5px;height:15px;background:#c84250"></div>
<div class="t " style="left:490.5px;top:147.5px;color:#fff;font-size:8px;font-weight:bold">x</div>
<svg style="left:323px;top:177px" width="15" height="15" viewBox="0 0 15 15"><path d="M0.900 14.100 L1.500 11.300 L7.200 5.600 L9.400 7.800 L3.700 13.500Z" fill="#cccccc"/><path d="M6.200 3.400 L11.600 8.800" stroke="#cccccc" stroke-width="2.300" stroke-linecap="round"/><path d="M9.500 5.500 L12.700 2.300" stroke="#cccccc" stroke-width="2.800" stroke-linecap="round"/></svg>
<div class="a" style="left:432px;top:176px;width:61px;height:19px;background:#e7e62a;border-radius:2px"></div>
<div class="a" style="left:320.5px;top:204px;width:173.5px;height:173.5px;border-radius:50%;background:conic-gradient(from 90deg,#f00,#f0f,#00f,#0ff,#0f0,#ff0,#f00)"></div>
<div class="a" style="left:339.5px;top:223px;width:135.5px;height:135.5px;border-radius:50%;background:#3b3b3b"></div>
<div class="a" style="left:365px;top:248px;width:85px;height:85px;background:linear-gradient(to bottom,rgba(0,0,0,0),#000),linear-gradient(to right,#fff,#ff0)"></div>
<div class="a" style="left:438px;top:215px;width:18px;height:18px;border-radius:50%;background:#ffff00;border:1.5px solid #fff"></div>
<div class="a" style="left:430px;top:251px;width:9px;height:9px;border-radius:50%;border:1px solid #1a1a1a"></div>
<div class="dd" style="left:428px;top:387px;width:65px;height:13px;line-height:12px;padding-top:0px;padding-left:2px;font-size:10px;letter-spacing:0">RGB 0-255</div>
<div class="arr" style="left:482.5px;top:392px;border-top-color:#c4c4c4"></div>
<div class="t " style="left:323px;top:410.5px;font-size:10px">R</div>
<div class="a" style="left:335px;top:407.6px;width:118px;height:14.4px;background:linear-gradient(to right,#00e62a,#ffe62a);border:1px solid #222"></div>
<div class="a" style="left:440px;top:409px;width:2px;height:12px;background:#e8e8e8;box-shadow:0 0 0 0.5px rgba(0,0,0,0.3)"></div>
<div class="fld" style="left:457px;top:408px;width:36px;height:14px;line-height:12px;padding-top:1px;padding-left:2px;font-size:10.4px">231</div>
<div class="t " style="left:323px;top:431.5px;font-size:10px">G</div>
<div class="a" style="left:335px;top:428.6px;width:118px;height:14.4px;background:linear-gradient(to right,#e7002a,#e7ff2a);border:1px solid #222"></div>
<div class="a" style="left:439px;top:430px;width:2px;height:12px;background:#e8e8e8;box-shadow:0 0 0 0.5px rgba(0,0,0,0.3)"></div>
<div class="fld" style="left:457px;top:429px;width:36px;height:14px;line-height:12px;padding-top:1px;padding-left:2px;font-size:10.4px">230</div>
<div class="t " style="left:323px;top:452.5px;font-size:10px">B</div>
<div class="a" style="left:335px;top:449.6px;width:118px;height:14.4px;background:linear-gradient(to right,#e7e600,#e7e6ff);border:1px solid #222"></div>
<div class="a" style="left:355px;top:451px;width:2px;height:12px;background:#e8e8e8;box-shadow:0 0 0 0.5px rgba(0,0,0,0.3)"></div>
<div class="fld" style="left:457px;top:450px;width:36px;height:14px;line-height:12px;padding-top:1px;padding-left:2px;font-size:10.4px">42</div>
<div class="t " style="left:323px;top:473.5px;font-size:10px">A</div>
<div class="a" style="left:335px;top:470.6px;width:118px;height:14.4px;background:linear-gradient(to right,rgba(255,112,255,0),rgba(255,112,255,0.95) 100%),repeating-conic-gradient(#fff 0 25%,#b8b8b8 0 50%) 0 0/6px 6px;border:1px solid #222"></div>
<div class="a" style="left:450px;top:472px;width:2px;height:12px;background:#e8e8e8;box-shadow:0 0 0 0.5px rgba(0,0,0,0.3)"></div>
<div class="fld" style="left:457px;top:471px;width:36px;height:14px;line-height:12px;padding-top:1px;padding-left:2px;font-size:10.4px">255</div>
<div class="t " style="left:323px;top:493px;font-size:10px">Hexadecimal</div>
<div class="fld" style="left:427px;top:491px;width:66px;height:14px;line-height:12px;padding-top:1px;padding-left:1px;font-size:10.4px">E7E62A</div>
<svg style="left:323px;top:515px" width="7" height="6" viewBox="0 0 7 6"><path d="M0 0 H7 L3.5 6Z" fill="#727272"/></svg>
<div class="t " style="left:333px;top:513px;font-size:10.2px">Swatches</div>
<svg style="left:483px;top:511px" width="4" height="10" viewBox="0 0 4 10"><circle cx="2" cy="1.500" r="0.900" fill="#c8c8c8"/><circle cx="2" cy="5" r="0.900" fill="#c8c8c8"/><circle cx="2" cy="8.500" r="0.900" fill="#c8c8c8"/></svg>
<div class="a" style="left:324.5px;top:527.5px;width:8px;height:8px;background:#e7e62a;border:1.2px solid #e8e8e8;border-radius:1.5px;box-shadow:0 0 0 1px #222"></div>
<div class="t " style="left:339px;top:528px;color:#8a8a8a;font-size:10.2px">Click to add new preset</div>
</div></body></html>
